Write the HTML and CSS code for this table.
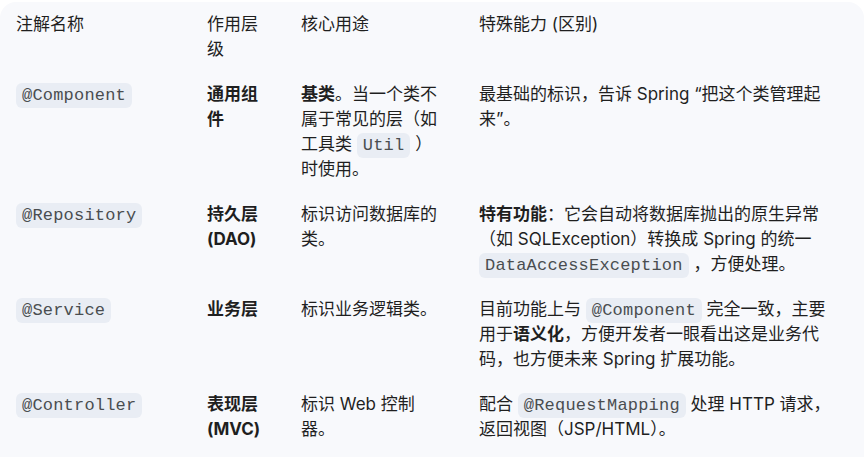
FILE: index.html
```html
<!DOCTYPE html>
<html lang="zh-CN">
<head>
<meta charset="utf-8">
<link rel="stylesheet" href="styles.css">
</head>
<body>
<div class="card">
<table class="tbl">
<colgroup><col class="c1"><col class="c2"><col class="c3"><col class="c4"></colgroup>
<thead>
<tr><th>注解名称</th><th>作用层级</th><th>核心用途</th><th>特殊能力 (区别)</th></tr>
</thead>
<tbody>
<tr>
<td><code>@Component</code></td>
<td><b>通用组件</b></td>
<td><b>基类</b>。当一个类不属于常见的层（如工具类 <code>Util</code> ）时使用。</td>
<td>最基础的标识，告诉 Spring “把这个类管理起来”。</td>
</tr>
<tr>
<td><code>@Repository</code></td>
<td><b>持久层 (DAO)</b></td>
<td>标识访问数据库的类。</td>
<td><b>特有功能</b>：它会自动将数据库抛出的原生异常（如 SQLException）转换成 Spring 的统一 <code>DataAccessException</code> ，方便处理。</td>
</tr>
<tr>
<td><code>@Service</code></td>
<td><b>业务层</b></td>
<td>标识业务逻辑类。</td>
<td>目前功能上与 <code>@Component</code> 完全一致，主要用于<b>语义化</b>，方便开发者一眼看出这是业务代码，也方便未来 Spring 扩展功能。</td>
</tr>
<tr>
<td><code>@Controller</code></td>
<td><b>表现层 (MVC)</b></td>
<td>标识 Web 控制器。</td>
<td>配合 <code>@RequestMapping</code> 处理 HTTP 请求，返回视图（JSP/HTML）。</td>
</tr>
</tbody>
</table>
</div>
</body>
</html>
```

FILE: styles.css
```css
html, body {
  margin: 0;
  padding: 0;
  background: #ffffff;
}
body {
  font-family: "Inter", "Noto Sans CJK SC", sans-serif;
  font-size: 17px;
  line-height: 25px;
  color: #1f1f1f;
}
.card {
  margin-top: 2px;
  width: 864px;
  height: 455px;
  overflow: hidden;
  background: #f8f9fc;
  border-radius: 16px 16px 0 0;
}
.tbl {
  border-collapse: collapse;
  table-layout: fixed;
  width: 848px;
}
.c1 { width: 191px; }
.c2 { width: 94px; }
.c3 { width: 178px; }
.c4 { width: 385px; }
.tbl th, .tbl td {
  text-align: left;
  vertical-align: top;
  padding: 10px 16px;
  font-weight: 400;
}
.tbl b {
  font-weight: 700;
}
code {
  font-family: "Liberation Mono", monospace;
  font-size: 17px;
  line-height: 1;
  letter-spacing: 0.2px;
  color: #4a4d50;
  background: #e9edf4;
  border-radius: 6px;
  padding: 3px 6px;
}
```
